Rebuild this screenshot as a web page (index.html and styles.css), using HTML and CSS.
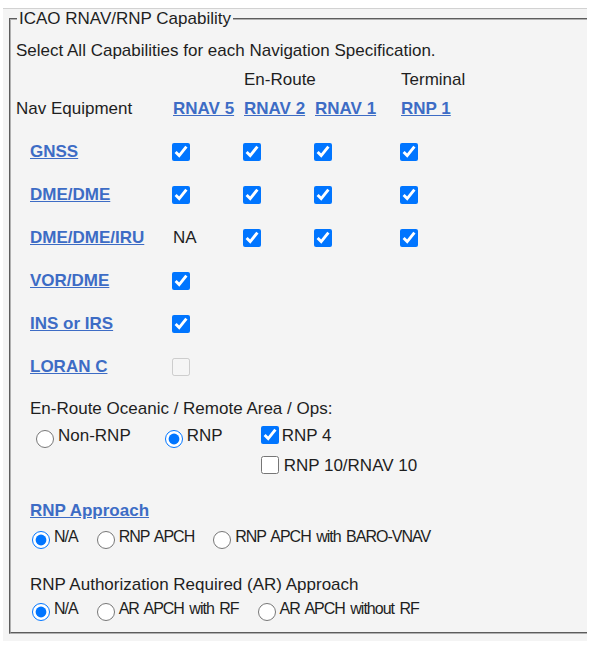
FILE: index.html
```html
<!DOCTYPE html>
<html>
<head>
<meta charset="utf-8">
<link rel="stylesheet" href="styles.css">
</head>
<body>
<div class="panel">
  <fieldset class="cap">
    <legend>ICAO RNAV/RNP Capability</legend>
    <p class="intro">Select All Capabilities for each Navigation Specification.</p>
    <table class="grid">
      <colgroup>
        <col class="c0"><col class="c1"><col class="c2"><col class="c3"><col class="c4">
      </colgroup>
      <tr class="h1">
        <td></td><td></td><td colspan="2">En-Route</td><td>Terminal</td>
      </tr>
      <tr class="h2">
        <td>Nav Equipment</td>
        <td><a href="#">RNAV 5</a></td>
        <td><a href="#">RNAV 2</a></td>
        <td><a href="#">RNAV 1</a></td>
        <td><a href="#">RNP 1</a></td>
      </tr>
      <tr class="row">
        <td class="eq"><a href="#">GNSS</a></td>
        <td><input type="checkbox" checked></td>
        <td><input type="checkbox" checked></td>
        <td><input type="checkbox" checked></td>
        <td><input type="checkbox" checked></td>
      </tr>
      <tr class="row">
        <td class="eq"><a href="#">DME/DME</a></td>
        <td><input type="checkbox" checked></td>
        <td><input type="checkbox" checked></td>
        <td><input type="checkbox" checked></td>
        <td><input type="checkbox" checked></td>
      </tr>
      <tr class="row">
        <td class="eq"><a href="#">DME/DME/IRU</a></td>
        <td>NA</td>
        <td><input type="checkbox" checked></td>
        <td><input type="checkbox" checked></td>
        <td><input type="checkbox" checked></td>
      </tr>
      <tr class="row">
        <td class="eq"><a href="#">VOR/DME</a></td>
        <td><input type="checkbox" checked></td>
        <td></td><td></td><td></td>
      </tr>
      <tr class="row">
        <td class="eq"><a href="#">INS or IRS</a></td>
        <td><input type="checkbox" checked></td>
        <td></td><td></td><td></td>
      </tr>
      <tr class="row">
        <td class="eq"><a href="#">LORAN C</a></td>
        <td><input type="checkbox" disabled></td>
        <td></td><td></td><td></td>
      </tr>
    </table>

    <div class="section oceanic">
      <div class="title">En-Route Oceanic / Remote Area / Ops:</div>
      <div class="ocean-row">
        <label class="opt r-non"><input type="radio" name="oc"><span>Non-RNP</span></label>
        <label class="opt r-rnp"><input type="radio" name="oc" checked><span>RNP</span></label>
        <div class="checks">
          <label class="chk"><input type="checkbox" checked><span>RNP 4</span></label>
          <label class="chk"><input type="checkbox"><span class="wide">RNP 10/RNAV 10</span></label>
        </div>
      </div>
    </div>

    <div class="section approach">
      <div class="title"><a href="#">RNP Approach</a></div>
      <div class="radio-row">
        <label class="opt"><input type="radio" name="ap" checked><span>N/A</span></label>
        <label class="opt"><input type="radio" name="ap"><span>RNP APCH</span></label>
        <label class="opt"><input type="radio" name="ap"><span>RNP APCH with BARO-VNAV</span></label>
      </div>
    </div>

    <div class="section ar">
      <div class="title">RNP Authorization Required (AR) Approach</div>
      <div class="radio-row">
        <label class="opt"><input type="radio" name="ar" checked><span>N/A</span></label>
        <label class="opt"><input type="radio" name="ar"><span>AR APCH with RF</span></label>
        <label class="opt"><input type="radio" name="ar"><span>AR APCH without RF</span></label>
      </div>
    </div>
  </fieldset>
</div>
</body>
</html>
```

FILE: styles.css
```css
body {
  margin: 0;
  background: #ffffff;
  font-family: "Liberation Sans", Arial, sans-serif;
  font-size: 17px;
  line-height: 19px;
  color: #1e1e1e;
}

.panel {
  margin: 8px 0 0 3px;
  width: 584px;
  height: 632px;
  background: #f4f4f4;
  border-top: 1px solid #d2d2d2;
  overflow: hidden;
}

.cap {
  margin: 0 0 0 6px;
  width: 620px;
  box-sizing: border-box;
  min-width: 0;
  border: 2px groove #b0b0b0;
  padding: 0 0 13px 5px;
}

.cap legend {
  padding: 0 2px;
  margin-left: 1px;
  line-height: 19px;
}

a {
  color: #3d6cc5;
  font-weight: bold;
  text-decoration: underline;
}

.intro {
  margin: 13px 0 5px 0;
}

.grid {
  border-collapse: collapse;
  table-layout: fixed;
  width: 500px;
}

.grid td {
  padding: 0;
  text-align: left;
  white-space: nowrap;
}

.c0 { width: 157px; }
.c1 { width: 71px; }
.c2 { width: 71px; }
.c3 { width: 86px; }
.c4 { width: 115px; }

.grid .h1 td {
  height: 29px;
  vertical-align: middle;
}

.grid .h2 td {
  height: 36px;
  vertical-align: top;
  padding-top: 5px;
  box-sizing: border-box;
}

.grid .row td {
  height: 43px;
  vertical-align: middle;
}

.grid .eq {
  padding-left: 14px;
}

input[type="checkbox"],
input[type="radio"] {
  width: 18px;
  height: 18px;
  margin: 0;
  accent-color: #0075ff;
  display: block;
}

.grid input[type="checkbox"] {
  margin-left: -1px;
}

.section .title {
  padding-left: 14px;
}

.oceanic {
  margin-top: 11px;
}

.ocean-row {
  display: flex;
  align-items: flex-start;
  margin-top: 6px;
  padding-left: 20px;
}

.opt {
  display: inline-flex;
  align-items: center;
  height: 22px;
}

.opt input {
  margin-top: 7px;
  margin-right: 4px;
}

.r-non { margin-right: 34px; }
.r-rnp { margin-right: 38px; }

.checks {
  display: flex;
  flex-direction: column;
  gap: 8px;
}

.chk {
  display: inline-flex;
  align-items: center;
  height: 22px;
}

.chk input {
  margin-right: 3px;
}

.chk .wide {
  margin-left: 2px;
}

.approach {
  margin-top: 25px;
}

.radio-row {
  display: flex;
  gap: 19px;
  padding-left: 16px;
  margin-top: 5px;
}

.radio-row span {
  font-size: 16px;
  letter-spacing: -1px;
  word-spacing: 2px;
}

.ar {
  margin-top: 28px;
}

.ar .radio-row {
  margin-top: 3px;
}
```
